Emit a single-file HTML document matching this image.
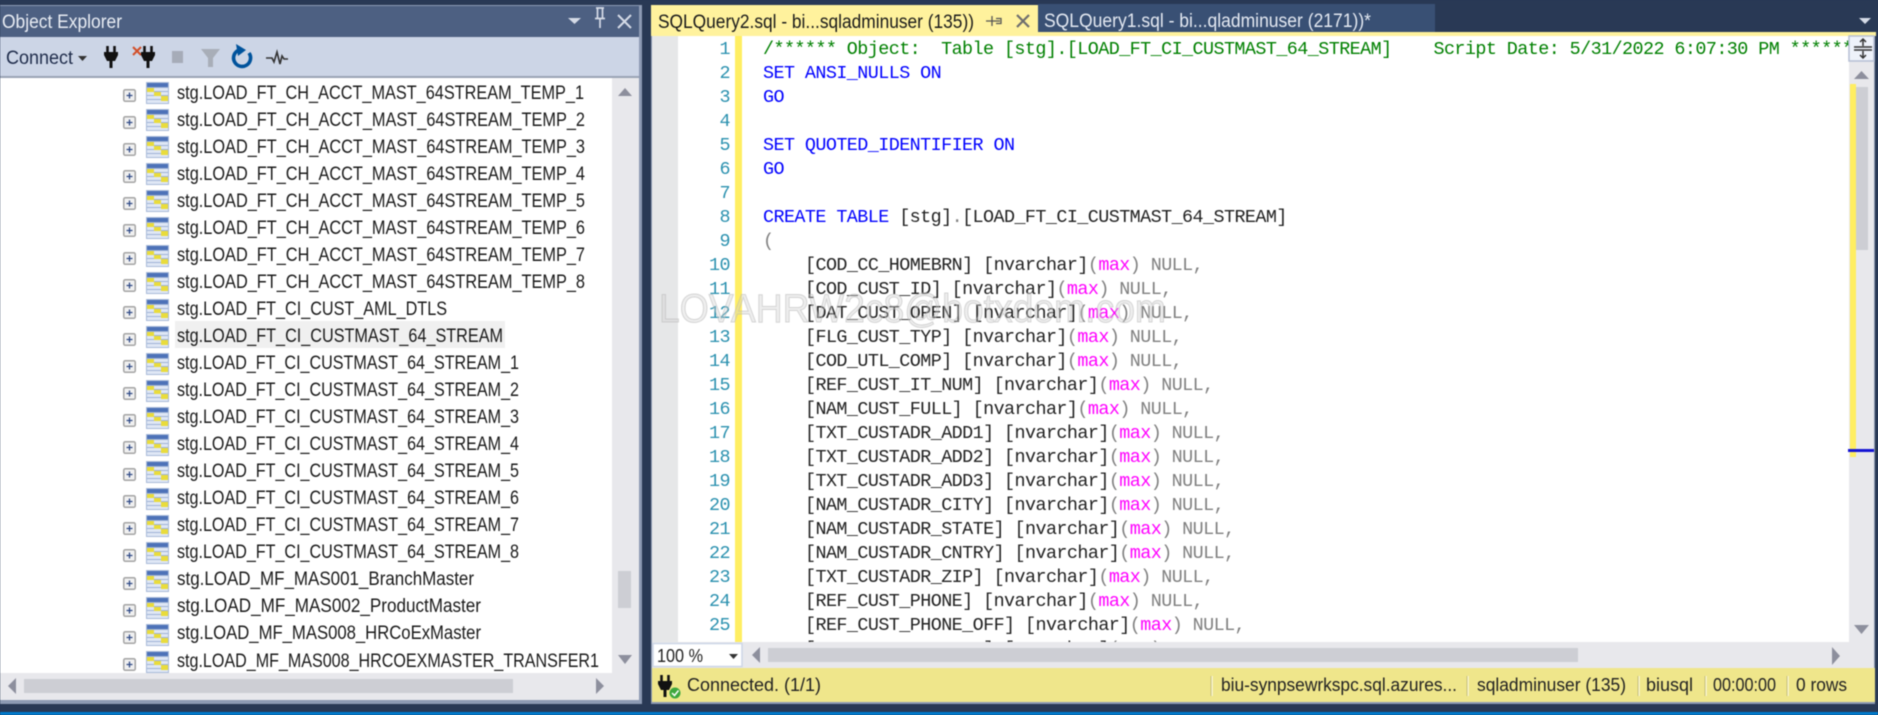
<!DOCTYPE html>
<html lang="en"><head><meta charset="utf-8"><title>SSMS</title>
<style>
html,body{margin:0;padding:0;width:1878px;height:715px;overflow:hidden;background:#293955}
svg{display:block;filter:blur(.55px)}
.s{font-family:"Liberation Sans",sans-serif}
.t{font-family:"Liberation Sans",sans-serif;font-size:19px;fill:#1a1a1a}
.m{font-family:"Liberation Mono",monospace;font-size:18.4px;letter-spacing:-.56px;fill:#222;white-space:pre;stroke:currentColor;stroke-width:0}
.n{fill:#2b91af;text-anchor:end}
.k{fill:#0000ff}.g{fill:#808080}.p{fill:#ff00ff}.c{fill:#008000}
.st{font-family:"Liberation Sans",sans-serif;font-size:18.5px;fill:#222}
</style></head><body>
<svg width="1878" height="715" viewBox="0 0 1878 715" xmlns="http://www.w3.org/2000/svg">
<defs>
<g id="tb">
<rect x="0" y="0" width="23" height="22" fill="#dfe7f5"/>
<rect x="0" y="0" width="23" height="5" fill="#4d72b8"/>
<path d="M0 5.5H23M0 9.5H23M0 13.5H23M0 17.5H23" stroke="#9fb2d6" stroke-width="1" fill="none"/>
<rect x="1" y="6" width="7" height="4" fill="#e9dc3c"/>
<rect x="8" y="10" width="7" height="4" fill="#e9dc3c"/>
<rect x="15" y="14" width="7" height="5" fill="#e9dc3c"/>
<rect x=".5" y=".5" width="22" height="21" fill="none" stroke="#a9bbd9"/>
</g>
<g id="ex" transform="translate(0,-1)">
<rect x=".75" y=".75" width="11.5" height="11.5" rx="1.5" fill="#f0f0f0" stroke="#a5a5a5" stroke-width="1.5"/>
<path d="M3.5 6.5H9.5M6.5 3.5V9.5" stroke="#2f4a86" stroke-width="1.3"/>
</g>
<g id="plug">
<path d="M-3.5 0V6M3.5 0V6" stroke="#111" stroke-width="2.6" fill="none"/>
<path d="M-7 6H7V9L4 15H-4L-7 9Z" fill="#111"/>
<rect x="-1.5" y="14" width="3" height="8" fill="#111"/>
</g>
<clipPath id="tree"><rect x="0" y="78" width="612" height="595"/></clipPath>
<clipPath id="ed"><rect x="652" y="36" width="1197" height="606"/></clipPath>
</defs>

<rect width="1878" height="715" fill="#293955"/>
<rect x="0" y="712" width="1878" height="3" fill="#007acc"/>

<!-- Object Explorer panel -->
<rect x="0" y="5" width="642" height="699" fill="#8d9ab3"/>
<rect x="0" y="6" width="639" height="31" fill="#4d6082"/>
<text class="s" x="2" y="28" font-size="19" fill="#e9edf4" textLength="120" lengthAdjust="spacingAndGlyphs">Object Explorer</text>
<path d="M568 18H581L574.500 24Z" fill="#d5dbe7"/>
<path d="M596 8H604M597.500 8V18M602.500 8V18M595 18.500H605M600 18.500V28" stroke="#d5dbe7" stroke-width="1.700" fill="none"/>
<path d="M618 15L631 28M631 15L618 28" stroke="#d5dbe7" stroke-width="2" fill="none"/>

<rect x="0" y="37" width="639" height="41" fill="#ccd5e6"/>
<rect x="0" y="76" width="639" height="2" fill="#9aa3b5"/>
<text class="s" x="6" y="64" font-size="19" fill="#1e2b4a" textLength="67" lengthAdjust="spacingAndGlyphs">Connect</text>
<path d="M78 56H87L82.500 61Z" fill="#333"/>
<use href="#plug" x="111" y="46"/>
<path d="M133 47L141 55M141 47L133 55" stroke="#d2502a" stroke-width="2" fill="none"/>
<use href="#plug" x="148" y="46"/>
<rect x="172" y="51" width="11" height="12" fill="#a6acb8"/>
<path d="M201 49H220L213 58V67H208V58Z" fill="#a8aeb8"/>
<path d="M249 53A8.500 8.500 0 1 1 239 50" stroke="#00539c" stroke-width="3.600" fill="none"/>
<path d="M236 44L246 50L238 56Z" fill="#00539c"/>
<path d="M266 58H272L274 62L277 52L280 64L282 56L284 59H288" stroke="#333" stroke-width="1.600" fill="none"/>

<!-- tree -->
<rect x="0" y="78" width="612" height="595" fill="#fff"/>
<rect x="175" y="321" width="330" height="27" fill="#f0f0f0"/>
<g clip-path="url(#tree)">
<use href="#tb" x="146" y="82"/><use href="#ex" x="123" y="90"/>
<use href="#tb" x="146" y="109"/><use href="#ex" x="123" y="117"/>
<use href="#tb" x="146" y="136"/><use href="#ex" x="123" y="144"/>
<use href="#tb" x="146" y="163"/><use href="#ex" x="123" y="171"/>
<use href="#tb" x="146" y="190"/><use href="#ex" x="123" y="198"/>
<use href="#tb" x="146" y="217"/><use href="#ex" x="123" y="225"/>
<use href="#tb" x="146" y="245"/><use href="#ex" x="123" y="253"/>
<use href="#tb" x="146" y="272"/><use href="#ex" x="123" y="280"/>
<use href="#tb" x="146" y="299"/><use href="#ex" x="123" y="307"/>
<use href="#tb" x="146" y="326"/><use href="#ex" x="123" y="334"/>
<use href="#tb" x="146" y="353"/><use href="#ex" x="123" y="361"/>
<use href="#tb" x="146" y="380"/><use href="#ex" x="123" y="388"/>
<use href="#tb" x="146" y="407"/><use href="#ex" x="123" y="415"/>
<use href="#tb" x="146" y="434"/><use href="#ex" x="123" y="442"/>
<use href="#tb" x="146" y="461"/><use href="#ex" x="123" y="469"/>
<use href="#tb" x="146" y="488"/><use href="#ex" x="123" y="496"/>
<use href="#tb" x="146" y="515"/><use href="#ex" x="123" y="523"/>
<use href="#tb" x="146" y="542"/><use href="#ex" x="123" y="550"/>
<use href="#tb" x="146" y="570"/><use href="#ex" x="123" y="578"/>
<use href="#tb" x="146" y="597"/><use href="#ex" x="123" y="605"/>
<use href="#tb" x="146" y="624"/><use href="#ex" x="123" y="632"/>
<use href="#tb" x="146" y="651"/><use href="#ex" x="123" y="659"/>

<text class="t" x="177" y="99" textLength="407" lengthAdjust="spacingAndGlyphs">stg.LOAD_FT_CH_ACCT_MAST_64STREAM_TEMP_1</text>
<text class="t" x="177" y="126" textLength="408" lengthAdjust="spacingAndGlyphs">stg.LOAD_FT_CH_ACCT_MAST_64STREAM_TEMP_2</text>
<text class="t" x="177" y="153" textLength="408" lengthAdjust="spacingAndGlyphs">stg.LOAD_FT_CH_ACCT_MAST_64STREAM_TEMP_3</text>
<text class="t" x="177" y="180" textLength="408" lengthAdjust="spacingAndGlyphs">stg.LOAD_FT_CH_ACCT_MAST_64STREAM_TEMP_4</text>
<text class="t" x="177" y="207" textLength="408" lengthAdjust="spacingAndGlyphs">stg.LOAD_FT_CH_ACCT_MAST_64STREAM_TEMP_5</text>
<text class="t" x="177" y="234" textLength="408" lengthAdjust="spacingAndGlyphs">stg.LOAD_FT_CH_ACCT_MAST_64STREAM_TEMP_6</text>
<text class="t" x="177" y="261" textLength="408" lengthAdjust="spacingAndGlyphs">stg.LOAD_FT_CH_ACCT_MAST_64STREAM_TEMP_7</text>
<text class="t" x="177" y="288" textLength="408" lengthAdjust="spacingAndGlyphs">stg.LOAD_FT_CH_ACCT_MAST_64STREAM_TEMP_8</text>
<text class="t" x="177" y="315" textLength="270" lengthAdjust="spacingAndGlyphs">stg.LOAD_FT_CI_CUST_AML_DTLS</text>
<text class="t" x="177" y="342" textLength="326" lengthAdjust="spacingAndGlyphs">stg.LOAD_FT_CI_CUSTMAST_64_STREAM</text>
<text class="t" x="177" y="369" textLength="342" lengthAdjust="spacingAndGlyphs">stg.LOAD_FT_CI_CUSTMAST_64_STREAM_1</text>
<text class="t" x="177" y="396" textLength="342" lengthAdjust="spacingAndGlyphs">stg.LOAD_FT_CI_CUSTMAST_64_STREAM_2</text>
<text class="t" x="177" y="423" textLength="342" lengthAdjust="spacingAndGlyphs">stg.LOAD_FT_CI_CUSTMAST_64_STREAM_3</text>
<text class="t" x="177" y="450" textLength="342" lengthAdjust="spacingAndGlyphs">stg.LOAD_FT_CI_CUSTMAST_64_STREAM_4</text>
<text class="t" x="177" y="477" textLength="342" lengthAdjust="spacingAndGlyphs">stg.LOAD_FT_CI_CUSTMAST_64_STREAM_5</text>
<text class="t" x="177" y="504" textLength="342" lengthAdjust="spacingAndGlyphs">stg.LOAD_FT_CI_CUSTMAST_64_STREAM_6</text>
<text class="t" x="177" y="531" textLength="342" lengthAdjust="spacingAndGlyphs">stg.LOAD_FT_CI_CUSTMAST_64_STREAM_7</text>
<text class="t" x="177" y="558" textLength="342" lengthAdjust="spacingAndGlyphs">stg.LOAD_FT_CI_CUSTMAST_64_STREAM_8</text>
<text class="t" x="177" y="585" textLength="297" lengthAdjust="spacingAndGlyphs">stg.LOAD_MF_MAS001_BranchMaster</text>
<text class="t" x="177" y="612" textLength="304" lengthAdjust="spacingAndGlyphs">stg.LOAD_MF_MAS002_ProductMaster</text>
<text class="t" x="177" y="639" textLength="304" lengthAdjust="spacingAndGlyphs">stg.LOAD_MF_MAS008_HRCoExMaster</text>
<text class="t" x="177" y="667" textLength="422" lengthAdjust="spacingAndGlyphs">stg.LOAD_MF_MAS008_HRCOEXMASTER_TRANSFER1</text>
</g>

<!-- tree v scrollbar -->
<rect x="612" y="78" width="27" height="595" fill="#e8e8ec"/>
<rect x="618" y="571" width="13" height="37" fill="#cdced4"/>
<path d="M618 96H632L625 88Z" fill="#8d8f9d"/>
<path d="M618 655H632L625 664Z" fill="#8d8f9d"/>
<!-- tree h scrollbar -->
<rect x="0" y="673" width="639" height="27" fill="#e8e8ec"/>
<rect x="24" y="679" width="489" height="14" fill="#cdced4"/>
<path d="M16 678V694L8 686Z" fill="#8d8f9d"/>
<path d="M596 678V694L604 686Z" fill="#8d8f9d"/>

<!-- editor frame -->
<rect x="651" y="5" width="387" height="31" fill="#fff29d"/>
<rect x="1038" y="4" width="397" height="28" fill="#395074"/>
<rect x="651" y="32" width="1225" height="4" fill="#fff29d"/>
<text class="s" x="658" y="28" font-size="19" fill="#1a1a1a" textLength="316" lengthAdjust="spacingAndGlyphs">SQLQuery2.sql - bi...sqladminuser (135))</text>
<path d="M992 16V26M992 21H1000M996 18.500H1001V23.500H996M986 21H992" stroke="#555" stroke-width="1.300" fill="none"/>
<path d="M1017 15L1029 27M1029 15L1017 27" stroke="#6e6e6e" stroke-width="2.200" fill="none"/>
<text class="s" x="1044" y="27" font-size="19" fill="#e4e9f2" textLength="327" lengthAdjust="spacingAndGlyphs">SQLQuery1.sql - bi...qladminuser (2171))*</text>
<path d="M1859 18H1871L1865 24Z" fill="#d6dce8"/>

<rect x="651" y="36" width="1224" height="668" fill="#8d9ab3"/>
<rect x="652" y="36" width="1197" height="606" fill="#fff"/>
<rect x="652" y="36" width="26" height="606" fill="#e6e7e8"/>
<rect x="735" y="36" width="7" height="606" fill="#ffee62"/>

<g clip-path="url(#ed)">
<g class="m">
<text class="m n" x="730" y="54">1</text>
<text class="m n" x="730" y="78">2</text>
<text class="m n" x="730" y="102">3</text>
<text class="m n" x="730" y="126">4</text>
<text class="m n" x="730" y="150">5</text>
<text class="m n" x="730" y="174">6</text>
<text class="m n" x="730" y="198">7</text>
<text class="m n" x="730" y="222">8</text>
<text class="m n" x="730" y="246">9</text>
<text class="m n" x="730" y="270">10</text>
<text class="m n" x="730" y="294">11</text>
<text class="m n" x="730" y="318">12</text>
<text class="m n" x="730" y="342">13</text>
<text class="m n" x="730" y="366">14</text>
<text class="m n" x="730" y="390">15</text>
<text class="m n" x="730" y="414">16</text>
<text class="m n" x="730" y="438">17</text>
<text class="m n" x="730" y="462">18</text>
<text class="m n" x="730" y="486">19</text>
<text class="m n" x="730" y="510">20</text>
<text class="m n" x="730" y="534">21</text>
<text class="m n" x="730" y="558">22</text>
<text class="m n" x="730" y="582">23</text>
<text class="m n" x="730" y="606">24</text>
<text class="m n" x="730" y="630">25</text>

<text class="m c" x="763" y="54">/****** Object:  Table [stg].[LOAD_FT_CI_CUSTMAST_64_STREAM]    Script Date: 5/31/2022 6:07:30 PM ******/</text>
<text class="m k" x="763" y="78">SET ANSI_NULLS ON</text>
<text class="m k" x="763" y="102">GO</text>
<text class="m k" x="763" y="150">SET QUOTED_IDENTIFIER ON</text>
<text class="m k" x="763" y="174">GO</text>
<text class="m" x="763" y="222"><tspan class="k">CREATE TABLE</tspan> [stg]<tspan class="g">.</tspan>[LOAD_FT_CI_CUSTMAST_64_STREAM]</text>
<text class="m g" x="763" y="246">(</text>
<text class="m" x="805" y="270">[COD_CC_HOMEBRN] [nvarchar]<tspan class="g">(</tspan><tspan class="p">max</tspan><tspan class="g">) NULL,</tspan></text>
<text class="m" x="805" y="294">[COD_CUST_ID] [nvarchar]<tspan class="g">(</tspan><tspan class="p">max</tspan><tspan class="g">) NULL,</tspan></text>
<text class="m" x="805" y="318">[DAT_CUST_OPEN] [nvarchar]<tspan class="g">(</tspan><tspan class="p">max</tspan><tspan class="g">) NULL,</tspan></text>
<text class="m" x="805" y="342">[FLG_CUST_TYP] [nvarchar]<tspan class="g">(</tspan><tspan class="p">max</tspan><tspan class="g">) NULL,</tspan></text>
<text class="m" x="805" y="366">[COD_UTL_COMP] [nvarchar]<tspan class="g">(</tspan><tspan class="p">max</tspan><tspan class="g">) NULL,</tspan></text>
<text class="m" x="805" y="390">[REF_CUST_IT_NUM] [nvarchar]<tspan class="g">(</tspan><tspan class="p">max</tspan><tspan class="g">) NULL,</tspan></text>
<text class="m" x="805" y="414">[NAM_CUST_FULL] [nvarchar]<tspan class="g">(</tspan><tspan class="p">max</tspan><tspan class="g">) NULL,</tspan></text>
<text class="m" x="805" y="438">[TXT_CUSTADR_ADD1] [nvarchar]<tspan class="g">(</tspan><tspan class="p">max</tspan><tspan class="g">) NULL,</tspan></text>
<text class="m" x="805" y="462">[TXT_CUSTADR_ADD2] [nvarchar]<tspan class="g">(</tspan><tspan class="p">max</tspan><tspan class="g">) NULL,</tspan></text>
<text class="m" x="805" y="486">[TXT_CUSTADR_ADD3] [nvarchar]<tspan class="g">(</tspan><tspan class="p">max</tspan><tspan class="g">) NULL,</tspan></text>
<text class="m" x="805" y="510">[NAM_CUSTADR_CITY] [nvarchar]<tspan class="g">(</tspan><tspan class="p">max</tspan><tspan class="g">) NULL,</tspan></text>
<text class="m" x="805" y="534">[NAM_CUSTADR_STATE] [nvarchar]<tspan class="g">(</tspan><tspan class="p">max</tspan><tspan class="g">) NULL,</tspan></text>
<text class="m" x="805" y="558">[NAM_CUSTADR_CNTRY] [nvarchar]<tspan class="g">(</tspan><tspan class="p">max</tspan><tspan class="g">) NULL,</tspan></text>
<text class="m" x="805" y="582">[TXT_CUSTADR_ZIP] [nvarchar]<tspan class="g">(</tspan><tspan class="p">max</tspan><tspan class="g">) NULL,</tspan></text>
<text class="m" x="805" y="606">[REF_CUST_PHONE] [nvarchar]<tspan class="g">(</tspan><tspan class="p">max</tspan><tspan class="g">) NULL,</tspan></text>
<text class="m" x="805" y="630">[REF_CUST_PHONE_OFF] [nvarchar]<tspan class="g">(</tspan><tspan class="p">max</tspan><tspan class="g">) NULL,</tspan></text>
<text class="m" x="805" y="654">[REF_CUST_EMAIL_1] [nvarchar]<tspan class="g">(</tspan><tspan class="p">max</tspan><tspan class="g">) NULL,</tspan></text>
</g>
</g>

<!-- watermark -->
<text class="s" x="659" y="322" font-size="40" fill="#cfcfcf" fill-opacity=".35" stroke="#b8b8b8" stroke-opacity=".55" stroke-width="1" textLength="507" lengthAdjust="spacingAndGlyphs">LOVAHRW2c8@botxdom.com</text>

<!-- editor v scrollbar -->
<rect x="1849" y="36" width="25" height="606" fill="#e8e8ec"/>
<rect x="1849" y="36" width="25" height="25" fill="#eef2fa" stroke="#b6bfd4" stroke-width="1.500"/>
<path d="M1854 47H1872M1854 50H1872M1863 40V46M1863 51V57" stroke="#333" stroke-width="1.500" fill="none"/>
<path d="M1860 42L1863 39L1866 42M1860 55L1863 58L1866 55" stroke="#333" stroke-width="1.500" fill="none"/>
<path d="M1854 79H1869L1861.500 71Z" fill="#8d8f9d"/>
<rect x="1856" y="87" width="12" height="163" fill="#cdced4"/>
<rect x="1850" y="84" width="6" height="373" fill="#ffee62"/>
<rect x="1848" y="449" width="26" height="3" fill="#1414d4"/>
<path d="M1854 625H1869L1861.500 634Z" fill="#8d8f9d"/>

<!-- zoom + h scrollbar -->
<rect x="652" y="642" width="1222" height="26" fill="#e8e8ec"/>
<rect x="653" y="643.500" width="89" height="23" fill="#fff" stroke="#ccd5e6" stroke-width="1.500"/>
<text class="s" x="657" y="662" font-size="18.500" fill="#222" textLength="46" lengthAdjust="spacingAndGlyphs">100 %</text>
<path d="M729 654H738L733.500 659Z" fill="#333"/>
<path d="M760 647V663L752 655Z" fill="#8d8f9d"/>
<rect x="768" y="648" width="810" height="14" fill="#cdced4"/>
<path d="M1832 647V665L1840 656Z" fill="#8d8f9d"/>

<!-- status bar -->
<rect x="652" y="668" width="1223" height="34" fill="#efe68b"/>
<use href="#plug" x="665" y="675"/>
<circle cx="675" cy="693" r="5.500" fill="#3ea83e"/>
<path d="M672 693L674.500 695.500L678.500 690.500" stroke="#fff" stroke-width="1.500" fill="none"/>
<text class="st" x="687" y="691" textLength="134" lengthAdjust="spacingAndGlyphs">Connected. (1/1)</text>
<path d="M1212 676V696M1468 676V696M1639 676V696M1706 676V696M1788 676V696" stroke="#fbf8d8" stroke-width="1.500" fill="none"/>
<path d="M1211 676V696M1467 676V696M1638 676V696M1705 676V696M1787 676V696" stroke="#c6bf78" stroke-width="1" fill="none"/>
<text class="st" x="1221" y="691" textLength="236" lengthAdjust="spacingAndGlyphs">biu-synpsewrkspc.sql.azures...</text>
<text class="st" x="1477" y="691" textLength="149" lengthAdjust="spacingAndGlyphs">sqladminuser (135)</text>
<text class="st" x="1646" y="691" textLength="47" lengthAdjust="spacingAndGlyphs">biusql</text>
<text class="st" x="1713" y="691" textLength="63" lengthAdjust="spacingAndGlyphs">00:00:00</text>
<text class="st" x="1796" y="691" textLength="51" lengthAdjust="spacingAndGlyphs">0 rows</text>
</svg>
</body></html>
